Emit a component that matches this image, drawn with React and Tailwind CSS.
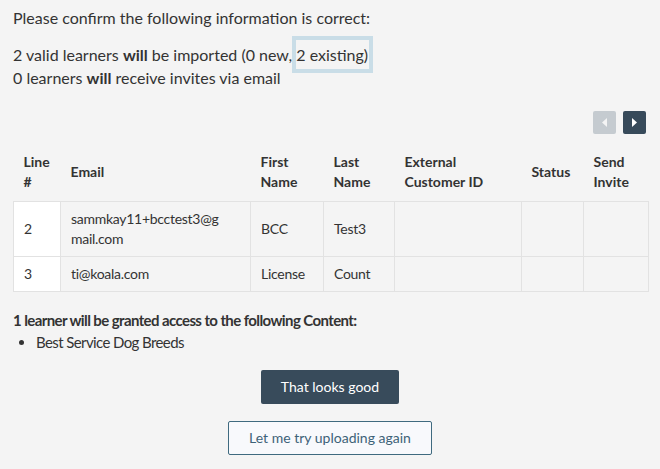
const COLS = [
  { label: ["Line", "#"], w: "w-[47px]" },
  { label: ["Email"], w: "w-[190px]" },
  { label: ["First", "Name"], w: "w-[73px]" },
  { label: ["Last", "Name"], w: "w-[71px]" },
  { label: ["External", "Customer ID"], w: "w-[127px]" },
  { label: ["Status"], w: "w-[62px]" },
  { label: ["Send", "Invite"], w: "w-[65px]" },
];

const ROWS = [
  { line: 2, email: ["sammkay11+bcctest3@g", "mail.com"], first: "BCC", last: "Test3" },
  { line: 3, email: ["ti@koala.com"], first: "License", last: "Count" },
];

export default function App() {
  return (
    <div className="min-h-[469px] bg-[#f4f4f4] px-[13px] pt-[6px] text-[16px] leading-[23px] text-[#333] font-['Lato','Noto_Sans',sans-serif]">
      <p>Please confirm the following information is correct:</p>

      <div className="mt-[14px]">
        <p>
          2 valid learners <b>will</b> be imported (0 new,{" "}
          <span className="relative">
            2 existing)
            <span className="absolute -left-[4px] -right-[5px] -top-[9px] -bottom-[9px] border-4 border-[#c9dde7]" />
          </span>
        </p>
        <p>0 learners <b>will</b> receive invites via email</p>
      </div>

      <div className="flex justify-end gap-[7px] mt-[22px] pr-[1px]">
        <button className="w-[23px] h-[23px] rounded-[2px] bg-[#c5cbd0] flex items-center justify-center">
          <svg width="5" height="9" viewBox="0 0 5 9"><path d="M5 0 L0 4.5 L5 9 Z" fill="#f4f4f4" /></svg>
        </button>
        <button className="w-[23px] h-[23px] rounded-[2px] bg-[#374a5a] flex items-center justify-center">
          <svg width="5" height="9" viewBox="0 0 5 9"><path d="M0 0 L5 4.5 L0 9 Z" fill="#fff" /></svg>
        </button>
      </div>

      <table className="mt-[10px] w-[635px] table-fixed border-collapse text-[14px] leading-[20px]">
        <thead>
          <tr className="h-[57px]">
            {COLS.map((c, i) => (
              <th key={i} className={`${c.w} text-left font-bold align-middle px-[10px] text-[#333]`}>
                {c.label.map((l, j) => <div key={j}>{l}</div>)}
              </th>
            ))}
          </tr>
        </thead>
        <tbody className="tracking-[-0.02em]">
          {ROWS.map(r => (
            <tr key={r.line} className={r.email.length > 1 ? "h-[55px]" : "h-[35px]"}>
              <td className="border border-[#e2e2e2] bg-white px-[10px]">{r.line}</td>
              <td className="border border-[#e2e2e2] px-[10px] whitespace-nowrap">
                {r.email.map((e, j) => <div key={j}>{e}</div>)}
              </td>
              <td className="border border-[#e2e2e2] px-[10px]">{r.first}</td>
              <td className="border border-[#e2e2e2] px-[10px]">{r.last}</td>
              <td className="border border-[#e2e2e2]"></td>
              <td className="border border-[#e2e2e2]"></td>
              <td className="border border-[#e2e2e2]"></td>
            </tr>
          ))}
        </tbody>
      </table>

      <div className="text-[15px] leading-[22px] tracking-[-0.04em]">
        <p className="mt-[17px] font-bold">1 learner will be granted access to the following Content:</p>
        <ul className="list-disc pl-[23px]">
          <li>Best Service Dog Breeds</li>
        </ul>
      </div>

      <div className="flex flex-col items-center mt-[17px] gap-[17px] pb-[13px] text-[14px]">
        <button className="w-[138px] h-[34px] rounded-[2px] bg-[#384b5b] text-white">That looks good</button>
        <button className="w-[204px] h-[34px] rounded-[2px] border border-[#3f6a7f] bg-[#f8f9fc] text-[#3d6278]">Let me try uploading again</button>
      </div>
    </div>
  );
}
